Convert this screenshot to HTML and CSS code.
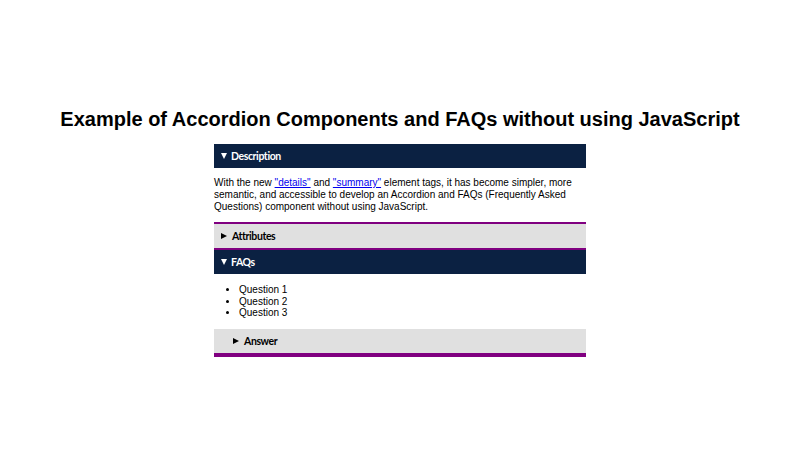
FILE: index.html
```html
<!DOCTYPE html>
<html lang="en">
<head>
<meta charset="utf-8">
<title>Accordion and FAQs without JavaScript</title>
<link rel="stylesheet" href="styles.css">
</head>
<body>
<main class="page">
  <h1 class="title">Example of Accordion Components and FAQs without using JavaScript</h1>
  <div class="accordion">
    <details class="item" open>
      <summary class="item-head">Description</summary>
      <p class="item-body">With the new <a href="#">"details"</a> and <a href="#">"summary"</a> element tags, it has become simpler, more semantic, and accessible to develop an Accordion and FAQs (Frequently Asked Questions) component without using JavaScript.</p>
    </details>
    <details class="item">
      <summary class="item-head">Attributes</summary>
      <p class="item-body">open</p>
    </details>
    <details class="item" open>
      <summary class="item-head">FAQs</summary>
      <ul class="faq-list">
        <li>Question 1</li>
        <li>Question 2</li>
        <li>Question 3</li>
      </ul>
      <details class="item nested">
        <summary class="item-head">Answer</summary>
        <p class="item-body">Yes.</p>
      </details>
    </details>
  </div>
</main>
</body>
</html>
```
FILE: styles.css
```css
html, body {
  margin: 0;
  padding: 0;
  background: #fff;
}

.page {
  height: 450px;
  box-sizing: border-box;
  padding-top: 107px;
  display: flex;
  flex-direction: column;
  align-items: center;
  font-family: "Liberation Sans", Arial, sans-serif;
  color: #000;
}

.title {
  font-size: 20px;
  font-weight: bold;
  margin: 0 0 13px;
  line-height: 24px;
}

.accordion {
  width: 372px;
}

.item {
  border-bottom: 2px solid #800080;
}

.item-head {
  display: flex;
  align-items: center;
  list-style: none;
  cursor: pointer;
  height: 24px;
  padding: 0 7px;
  background: #e0e0e0;
  color: #000;
  font-family: Lato, "Noto Sans", sans-serif;
  font-weight: bold;
  font-size: 10.5px;
  letter-spacing: -0.4px;
}

.item-head::-webkit-details-marker {
  display: none;
}

/* disclosure triangle: right when closed, down when open */
.item-head::before {
  content: "";
  width: 0;
  height: 0;
  margin-right: 5px;
  border-style: solid;
  border-width: 3.5px 0 3.5px 6px;
  border-color: transparent transparent transparent currentColor;
}

.item[open] > .item-head {
  background: #0b2142;
  color: #fff;
}

.item[open] > .item-head::before {
  border-width: 6px 3.5px 0 3.5px;
  border-color: currentColor transparent transparent transparent;
  margin-right: 4px;
}

.item-body {
  margin: 0;
  padding: 9px 0 9px;
  font-size: 10px;
  line-height: 12px;
}

.item-body a {
  color: #0000ee;
}

.faq-list {
  margin: 0;
  padding: 10px 0 10px 25px;
  font-size: 10px;
  line-height: 11.5px;
}

.nested > .item-head {
  padding-left: 19px;
}
```
